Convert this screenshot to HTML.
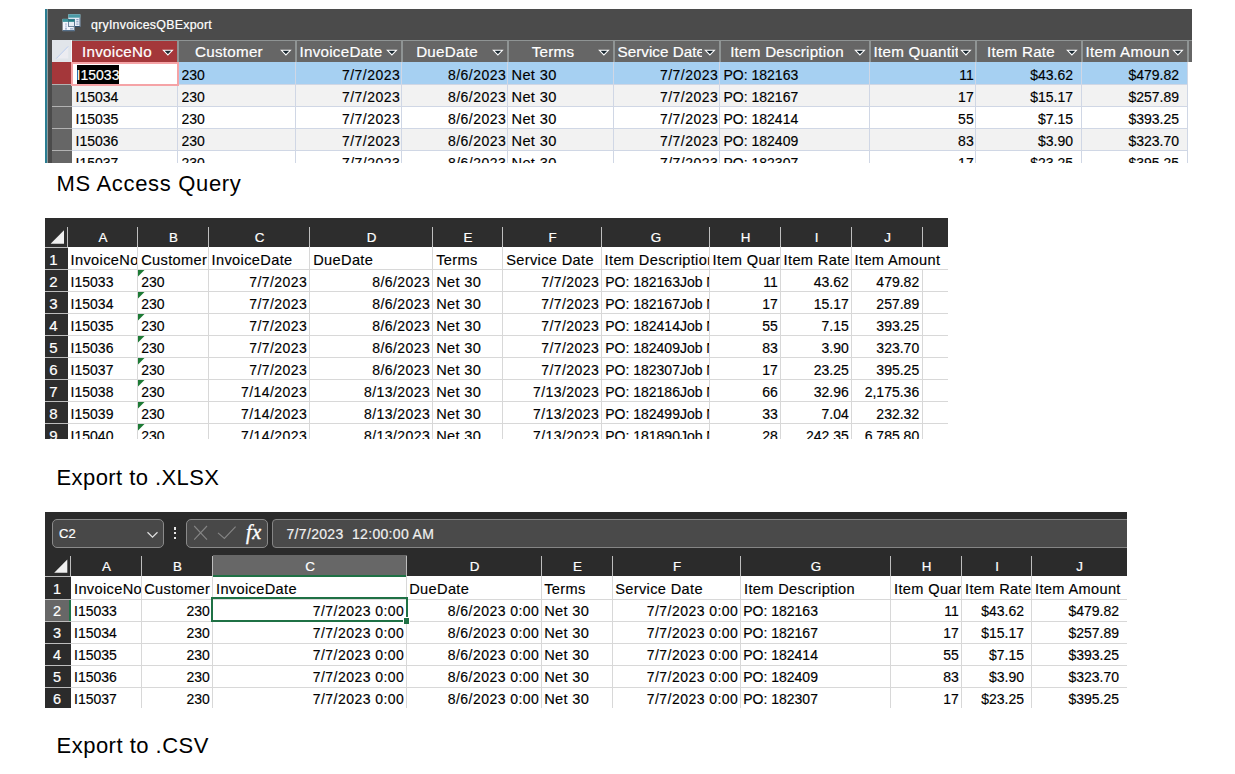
<!DOCTYPE html>
<html lang="en"><head><meta charset="utf-8"><title>Access export comparison</title>
<style>
html,body{margin:0;padding:0;background:#fff;}
body{width:1235px;height:774px;position:relative;overflow:hidden;font-family:"Liberation Sans", sans-serif;}
div{position:absolute;}
.t{font-family:"Liberation Sans", sans-serif;font-size:14px;line-height:22px;height:22px;white-space:pre;}
.t span{line-height:0;-webkit-text-stroke:0.15px currentColor;}
.lbl span{-webkit-text-stroke:0;}
.w span{-webkit-text-stroke:0.2px currentColor;}
</style></head><body>
<div class="sec" style="left:0;top:0;width:1235px;height:163px;overflow:hidden">
<div style="left:45px;top:9px;width:2px;height:154px;background:#2a7d91;"></div>
<div style="left:47px;top:9px;width:1px;height:154px;background:#8f9a9d;"></div>
<div style="left:48px;top:9px;width:1144px;height:32px;background:#4b4b4b;"></div>
<div style="left:48px;top:41px;width:4px;height:122px;background:#4b4b4b;"></div>
<svg style="position:absolute;left:62px;top:14px" width="19" height="18" viewBox="0 0 19 18"><rect x="6.3" y="0.3" width="12" height="12.6" fill="#e9eef8"/><rect x="6.3" y="0.3" width="12" height="3.4" fill="#4b9ba6"/><rect x="6.3" y="12" width="12" height="1" fill="#2f4f6d"/><rect x="17.5" y="3.7" width="0.9" height="9" fill="#54718d"/><rect x="14.3" y="5.2" width="2.2" height="1" fill="#7a8fb5"/><rect x="14.3" y="7.3" width="2.2" height="1" fill="#7a8fb5"/><rect x="14.3" y="9.4" width="2.2" height="1.6" fill="#aab6d2"/><rect x="0.6" y="4.9" width="12" height="12.2" fill="#f3f5fc"/><rect x="0.6" y="4.9" width="12" height="3" fill="#3f949c"/><rect x="0.6" y="16.2" width="12" height="1" fill="#2f4f6d"/><rect x="11.8" y="8" width="0.9" height="9" fill="#54718d"/><rect x="3" y="9.2" width="2" height="2.4" fill="#c6cde3"/><rect x="3" y="12.4" width="2" height="1" fill="#aab6d2"/><rect x="3" y="14.4" width="2" height="1" fill="#7a8fb5"/><rect x="8" y="14.4" width="3" height="1" fill="#7a8fb5"/><rect x="6.5" y="5.4" width="6" height="7" fill="#e6ecf4" stroke="#3a5877" stroke-width="0.7"/><rect x="6.5" y="5.4" width="6" height="2.4" fill="#1f7b82"/></svg>
<div class="t w" style="top:13px;color:#fff;left:91px;"><span style="font-size:12.4px;letter-spacing:0.24px;">qryInvoicesQBExport</span></div>
<div style="left:52px;top:40px;width:1140px;height:22px;background:#8f9494;"></div>
<div style="left:52px;top:40px;width:20px;height:23px;background:#e1e5ea;box-shadow:inset -1px -1px 0 #f4f6f8;"></div>
<svg style="position:absolute;left:52px;top:40px" width="20" height="23"><polygon points="16.2,6.6 16.2,18.6 4.2,18.6" fill="#ececf1"/><line x1="4.2" y1="18.6" x2="16.2" y2="6.4" stroke="#b5caee" stroke-width="0.9"/></svg>
<div style="left:72px;top:41px;width:105px;height:21px;background:#a4373a;"></div>
<div class="t w" style="top:41px;color:#fff;left:73.5px;width:87px;text-align:center;"><span style="font-size:15.2px;letter-spacing:0.25px;">InvoiceNo</span></div>
<svg style="position:absolute;left:162.2px;top:49px" width="12" height="8"><polygon points="1.4,1.3 10.4,1.3 5.9,6" fill="#17262f" stroke="#fff" stroke-width="1.1"/></svg>
<div style="left:179px;top:41px;width:116px;height:21px;background:#666666;"></div>
<div class="t w" style="top:41px;color:#fff;left:179.5px;width:99px;text-align:center;"><span style="font-size:15.2px;letter-spacing:0.25px;">Customer</span></div>
<svg style="position:absolute;left:280.2px;top:49px" width="12" height="8"><polygon points="1.4,1.3 10.4,1.3 5.9,6" fill="#17262f" stroke="#fff" stroke-width="1.1"/></svg>
<div style="left:297px;top:41px;width:104px;height:21px;background:#666666;"></div>
<div class="t w" style="top:41px;color:#fff;left:297.5px;width:87px;text-align:center;"><span style="font-size:15.2px;letter-spacing:0.25px;">InvoiceDate</span></div>
<svg style="position:absolute;left:386.2px;top:49px" width="12" height="8"><polygon points="1.4,1.3 10.4,1.3 5.9,6" fill="#17262f" stroke="#fff" stroke-width="1.1"/></svg>
<div style="left:403px;top:41px;width:104px;height:21px;background:#666666;"></div>
<div class="t w" style="top:41px;color:#fff;left:403.5px;width:87px;text-align:center;"><span style="font-size:15.2px;letter-spacing:0.25px;">DueDate</span></div>
<svg style="position:absolute;left:492.2px;top:49px" width="12" height="8"><polygon points="1.4,1.3 10.4,1.3 5.9,6" fill="#17262f" stroke="#fff" stroke-width="1.1"/></svg>
<div style="left:509px;top:41px;width:104px;height:21px;background:#666666;"></div>
<div class="t w" style="top:41px;color:#fff;left:509.5px;width:87px;text-align:center;"><span style="font-size:15.2px;letter-spacing:0.25px;">Terms</span></div>
<svg style="position:absolute;left:598.2px;top:49px" width="12" height="8"><polygon points="1.4,1.3 10.4,1.3 5.9,6" fill="#17262f" stroke="#fff" stroke-width="1.1"/></svg>
<div style="left:615px;top:41px;width:104px;height:21px;background:#666666;"></div>
<div class="t w" style="top:41px;color:#fff;left:617.5px;width:84.5px;overflow:hidden;"><span style="font-size:15.2px;letter-spacing:0.05px;">Service Date</span></div>
<svg style="position:absolute;left:704.2px;top:49px" width="12" height="8"><polygon points="1.4,1.3 10.4,1.3 5.9,6" fill="#17262f" stroke="#fff" stroke-width="1.1"/></svg>
<div style="left:721px;top:41px;width:148px;height:21px;background:#666666;"></div>
<div class="t w" style="top:41px;color:#fff;left:721.5px;width:131px;text-align:center;"><span style="font-size:15.2px;letter-spacing:0.25px;">Item Description</span></div>
<svg style="position:absolute;left:854.2px;top:49px" width="12" height="8"><polygon points="1.4,1.3 10.4,1.3 5.9,6" fill="#17262f" stroke="#fff" stroke-width="1.1"/></svg>
<div style="left:871px;top:41px;width:104px;height:21px;background:#666666;"></div>
<div class="t w" style="top:41px;color:#fff;left:873.5px;width:84.5px;overflow:hidden;"><span style="font-size:15.2px;letter-spacing:0.25px;">Item Quantity</span></div>
<svg style="position:absolute;left:960.2px;top:49px" width="12" height="8"><polygon points="1.4,1.3 10.4,1.3 5.9,6" fill="#17262f" stroke="#fff" stroke-width="1.1"/></svg>
<div style="left:977px;top:41px;width:104px;height:21px;background:#666666;"></div>
<div class="t w" style="top:41px;color:#fff;left:977.5px;width:87px;text-align:center;"><span style="font-size:15.2px;letter-spacing:0.25px;">Item Rate</span></div>
<svg style="position:absolute;left:1066.2px;top:49px" width="12" height="8"><polygon points="1.4,1.3 10.4,1.3 5.9,6" fill="#17262f" stroke="#fff" stroke-width="1.1"/></svg>
<div style="left:1083px;top:41px;width:104px;height:21px;background:#666666;"></div>
<div class="t w" style="top:41px;color:#fff;left:1085.5px;width:84.5px;overflow:hidden;"><span style="font-size:15.2px;letter-spacing:0.32px;">Item Amount</span></div>
<svg style="position:absolute;left:1172.2px;top:49px" width="12" height="8"><polygon points="1.4,1.3 10.4,1.3 5.9,6" fill="#17262f" stroke="#fff" stroke-width="1.1"/></svg>
<div style="left:1189px;top:41px;width:3px;height:21px;background:#666666;"></div>
<div style="left:52px;top:62px;width:20px;height:23px;background:#a4373a;"></div>
<div style="left:52px;top:84px;width:20px;height:2px;background:#b2b2b2;"></div>
<div style="left:72px;top:62px;width:1116px;height:23px;background:#a6d0f2;"></div>
<div style="left:72px;top:84px;width:1116px;height:1px;background:#d0d7e5;"></div>
<div style="left:177px;top:62px;width:1px;height:23px;background:#d0d7e5;"></div>
<div style="left:295px;top:62px;width:1px;height:23px;background:#d0d7e5;"></div>
<div class="t " style="top:64px;color:#000;left:181.5px;width:113px;overflow:hidden;"><span style="font-size:14px;">230</span></div>
<div style="left:401px;top:62px;width:1px;height:23px;background:#d0d7e5;"></div>
<div class="t " style="top:64px;color:#000;left:100.15px;width:300px;text-align:right;"><span style="font-size:14px;letter-spacing:0.45px;">7/7/2023</span></div>
<div style="left:507px;top:62px;width:1px;height:23px;background:#d0d7e5;"></div>
<div class="t " style="top:64px;color:#000;left:206.15px;width:300px;text-align:right;"><span style="font-size:14px;letter-spacing:0.45px;">8/6/2023</span></div>
<div style="left:613px;top:62px;width:1px;height:23px;background:#d0d7e5;"></div>
<div class="t " style="top:64px;color:#000;left:511.5px;width:101px;overflow:hidden;"><span style="font-size:14.6px;letter-spacing:0.35px;">Net 30</span></div>
<div style="left:719px;top:62px;width:1px;height:23px;background:#d0d7e5;"></div>
<div class="t " style="top:64px;color:#000;left:418.15px;width:300px;text-align:right;"><span style="font-size:14px;letter-spacing:0.45px;">7/7/2023</span></div>
<div style="left:869px;top:62px;width:1px;height:23px;background:#d0d7e5;"></div>
<div class="t " style="top:64px;color:#000;left:723.5px;width:145px;overflow:hidden;"><span style="font-size:14px;">PO: 182163</span></div>
<div style="left:975px;top:62px;width:1px;height:23px;background:#d0d7e5;"></div>
<div class="t " style="top:64px;color:#000;left:673.7px;width:300px;text-align:right;"><span style="font-size:14px;">11</span></div>
<div style="left:1081px;top:62px;width:1px;height:23px;background:#d0d7e5;"></div>
<div class="t " style="top:64px;color:#000;left:773px;width:300px;text-align:right;"><span style="font-size:14px;">$43.62</span></div>
<div style="left:1187px;top:62px;width:1px;height:23px;background:#d0d7e5;"></div>
<div class="t " style="top:64px;color:#000;left:879px;width:300px;text-align:right;"><span style="font-size:14px;">$479.82</span></div>
<div style="left:52px;top:85px;width:20px;height:22px;background:#666666;"></div>
<div style="left:52px;top:106px;width:20px;height:2px;background:#b2b2b2;"></div>
<div style="left:72px;top:85px;width:1116px;height:22px;background:#f2f2f2;"></div>
<div style="left:72px;top:106px;width:1116px;height:1px;background:#d0d7e5;"></div>
<div style="left:177px;top:85px;width:1px;height:22px;background:#d0d7e5;"></div>
<div class="t " style="top:86px;color:#000;left:75.5px;width:101px;overflow:hidden;"><span style="font-size:14px;">I15034</span></div>
<div style="left:295px;top:85px;width:1px;height:22px;background:#d0d7e5;"></div>
<div class="t " style="top:86px;color:#000;left:181.5px;width:113px;overflow:hidden;"><span style="font-size:14px;">230</span></div>
<div style="left:401px;top:85px;width:1px;height:22px;background:#d0d7e5;"></div>
<div class="t " style="top:86px;color:#000;left:100.15px;width:300px;text-align:right;"><span style="font-size:14px;letter-spacing:0.45px;">7/7/2023</span></div>
<div style="left:507px;top:85px;width:1px;height:22px;background:#d0d7e5;"></div>
<div class="t " style="top:86px;color:#000;left:206.15px;width:300px;text-align:right;"><span style="font-size:14px;letter-spacing:0.45px;">8/6/2023</span></div>
<div style="left:613px;top:85px;width:1px;height:22px;background:#d0d7e5;"></div>
<div class="t " style="top:86px;color:#000;left:511.5px;width:101px;overflow:hidden;"><span style="font-size:14.6px;letter-spacing:0.35px;">Net 30</span></div>
<div style="left:719px;top:85px;width:1px;height:22px;background:#d0d7e5;"></div>
<div class="t " style="top:86px;color:#000;left:418.15px;width:300px;text-align:right;"><span style="font-size:14px;letter-spacing:0.45px;">7/7/2023</span></div>
<div style="left:869px;top:85px;width:1px;height:22px;background:#d0d7e5;"></div>
<div class="t " style="top:86px;color:#000;left:723.5px;width:145px;overflow:hidden;"><span style="font-size:14px;">PO: 182167</span></div>
<div style="left:975px;top:85px;width:1px;height:22px;background:#d0d7e5;"></div>
<div class="t " style="top:86px;color:#000;left:673.7px;width:300px;text-align:right;"><span style="font-size:14px;">17</span></div>
<div style="left:1081px;top:85px;width:1px;height:22px;background:#d0d7e5;"></div>
<div class="t " style="top:86px;color:#000;left:773px;width:300px;text-align:right;"><span style="font-size:14px;">$15.17</span></div>
<div style="left:1187px;top:85px;width:1px;height:22px;background:#d0d7e5;"></div>
<div class="t " style="top:86px;color:#000;left:879px;width:300px;text-align:right;"><span style="font-size:14px;">$257.89</span></div>
<div style="left:52px;top:107px;width:20px;height:22px;background:#666666;"></div>
<div style="left:52px;top:128px;width:20px;height:2px;background:#b2b2b2;"></div>
<div style="left:72px;top:107px;width:1116px;height:22px;background:#ffffff;"></div>
<div style="left:72px;top:128px;width:1116px;height:1px;background:#d0d7e5;"></div>
<div style="left:177px;top:107px;width:1px;height:22px;background:#d0d7e5;"></div>
<div class="t " style="top:108px;color:#000;left:75.5px;width:101px;overflow:hidden;"><span style="font-size:14px;">I15035</span></div>
<div style="left:295px;top:107px;width:1px;height:22px;background:#d0d7e5;"></div>
<div class="t " style="top:108px;color:#000;left:181.5px;width:113px;overflow:hidden;"><span style="font-size:14px;">230</span></div>
<div style="left:401px;top:107px;width:1px;height:22px;background:#d0d7e5;"></div>
<div class="t " style="top:108px;color:#000;left:100.15px;width:300px;text-align:right;"><span style="font-size:14px;letter-spacing:0.45px;">7/7/2023</span></div>
<div style="left:507px;top:107px;width:1px;height:22px;background:#d0d7e5;"></div>
<div class="t " style="top:108px;color:#000;left:206.15px;width:300px;text-align:right;"><span style="font-size:14px;letter-spacing:0.45px;">8/6/2023</span></div>
<div style="left:613px;top:107px;width:1px;height:22px;background:#d0d7e5;"></div>
<div class="t " style="top:108px;color:#000;left:511.5px;width:101px;overflow:hidden;"><span style="font-size:14.6px;letter-spacing:0.35px;">Net 30</span></div>
<div style="left:719px;top:107px;width:1px;height:22px;background:#d0d7e5;"></div>
<div class="t " style="top:108px;color:#000;left:418.15px;width:300px;text-align:right;"><span style="font-size:14px;letter-spacing:0.45px;">7/7/2023</span></div>
<div style="left:869px;top:107px;width:1px;height:22px;background:#d0d7e5;"></div>
<div class="t " style="top:108px;color:#000;left:723.5px;width:145px;overflow:hidden;"><span style="font-size:14px;">PO: 182414</span></div>
<div style="left:975px;top:107px;width:1px;height:22px;background:#d0d7e5;"></div>
<div class="t " style="top:108px;color:#000;left:673.7px;width:300px;text-align:right;"><span style="font-size:14px;">55</span></div>
<div style="left:1081px;top:107px;width:1px;height:22px;background:#d0d7e5;"></div>
<div class="t " style="top:108px;color:#000;left:773px;width:300px;text-align:right;"><span style="font-size:14px;">$7.15</span></div>
<div style="left:1187px;top:107px;width:1px;height:22px;background:#d0d7e5;"></div>
<div class="t " style="top:108px;color:#000;left:879px;width:300px;text-align:right;"><span style="font-size:14px;">$393.25</span></div>
<div style="left:52px;top:129px;width:20px;height:22px;background:#666666;"></div>
<div style="left:52px;top:150px;width:20px;height:2px;background:#b2b2b2;"></div>
<div style="left:72px;top:129px;width:1116px;height:22px;background:#f2f2f2;"></div>
<div style="left:72px;top:150px;width:1116px;height:1px;background:#d0d7e5;"></div>
<div style="left:177px;top:129px;width:1px;height:22px;background:#d0d7e5;"></div>
<div class="t " style="top:130px;color:#000;left:75.5px;width:101px;overflow:hidden;"><span style="font-size:14px;">I15036</span></div>
<div style="left:295px;top:129px;width:1px;height:22px;background:#d0d7e5;"></div>
<div class="t " style="top:130px;color:#000;left:181.5px;width:113px;overflow:hidden;"><span style="font-size:14px;">230</span></div>
<div style="left:401px;top:129px;width:1px;height:22px;background:#d0d7e5;"></div>
<div class="t " style="top:130px;color:#000;left:100.15px;width:300px;text-align:right;"><span style="font-size:14px;letter-spacing:0.45px;">7/7/2023</span></div>
<div style="left:507px;top:129px;width:1px;height:22px;background:#d0d7e5;"></div>
<div class="t " style="top:130px;color:#000;left:206.15px;width:300px;text-align:right;"><span style="font-size:14px;letter-spacing:0.45px;">8/6/2023</span></div>
<div style="left:613px;top:129px;width:1px;height:22px;background:#d0d7e5;"></div>
<div class="t " style="top:130px;color:#000;left:511.5px;width:101px;overflow:hidden;"><span style="font-size:14.6px;letter-spacing:0.35px;">Net 30</span></div>
<div style="left:719px;top:129px;width:1px;height:22px;background:#d0d7e5;"></div>
<div class="t " style="top:130px;color:#000;left:418.15px;width:300px;text-align:right;"><span style="font-size:14px;letter-spacing:0.45px;">7/7/2023</span></div>
<div style="left:869px;top:129px;width:1px;height:22px;background:#d0d7e5;"></div>
<div class="t " style="top:130px;color:#000;left:723.5px;width:145px;overflow:hidden;"><span style="font-size:14px;">PO: 182409</span></div>
<div style="left:975px;top:129px;width:1px;height:22px;background:#d0d7e5;"></div>
<div class="t " style="top:130px;color:#000;left:673.7px;width:300px;text-align:right;"><span style="font-size:14px;">83</span></div>
<div style="left:1081px;top:129px;width:1px;height:22px;background:#d0d7e5;"></div>
<div class="t " style="top:130px;color:#000;left:773px;width:300px;text-align:right;"><span style="font-size:14px;">$3.90</span></div>
<div style="left:1187px;top:129px;width:1px;height:22px;background:#d0d7e5;"></div>
<div class="t " style="top:130px;color:#000;left:879px;width:300px;text-align:right;"><span style="font-size:14px;">$323.70</span></div>
<div style="left:52px;top:151px;width:20px;height:12px;background:#666666;"></div>
<div style="left:72px;top:151px;width:1116px;height:12px;background:#ffffff;"></div>
<div style="left:177px;top:151px;width:1px;height:12px;background:#d0d7e5;"></div>
<div class="t " style="top:152px;color:#000;left:75.5px;width:101px;overflow:hidden;"><span style="font-size:14px;">I15037</span></div>
<div style="left:295px;top:151px;width:1px;height:12px;background:#d0d7e5;"></div>
<div class="t " style="top:152px;color:#000;left:181.5px;width:113px;overflow:hidden;"><span style="font-size:14px;">230</span></div>
<div style="left:401px;top:151px;width:1px;height:12px;background:#d0d7e5;"></div>
<div class="t " style="top:152px;color:#000;left:100.15px;width:300px;text-align:right;"><span style="font-size:14px;letter-spacing:0.45px;">7/7/2023</span></div>
<div style="left:507px;top:151px;width:1px;height:12px;background:#d0d7e5;"></div>
<div class="t " style="top:152px;color:#000;left:206.15px;width:300px;text-align:right;"><span style="font-size:14px;letter-spacing:0.45px;">8/6/2023</span></div>
<div style="left:613px;top:151px;width:1px;height:12px;background:#d0d7e5;"></div>
<div class="t " style="top:152px;color:#000;left:511.5px;width:101px;overflow:hidden;"><span style="font-size:14.6px;letter-spacing:0.35px;">Net 30</span></div>
<div style="left:719px;top:151px;width:1px;height:12px;background:#d0d7e5;"></div>
<div class="t " style="top:152px;color:#000;left:418.15px;width:300px;text-align:right;"><span style="font-size:14px;letter-spacing:0.45px;">7/7/2023</span></div>
<div style="left:869px;top:151px;width:1px;height:12px;background:#d0d7e5;"></div>
<div class="t " style="top:152px;color:#000;left:723.5px;width:145px;overflow:hidden;"><span style="font-size:14px;">PO: 182307</span></div>
<div style="left:975px;top:151px;width:1px;height:12px;background:#d0d7e5;"></div>
<div class="t " style="top:152px;color:#000;left:673.7px;width:300px;text-align:right;"><span style="font-size:14px;">17</span></div>
<div style="left:1081px;top:151px;width:1px;height:12px;background:#d0d7e5;"></div>
<div class="t " style="top:152px;color:#000;left:773px;width:300px;text-align:right;"><span style="font-size:14px;">$23.25</span></div>
<div style="left:1187px;top:151px;width:1px;height:12px;background:#d0d7e5;"></div>
<div class="t " style="top:152px;color:#000;left:879px;width:300px;text-align:right;"><span style="font-size:14px;">$395.25</span></div>
<div style="left:71px;top:62px;width:108px;height:24px;background:#ffffff;box-sizing:border-box;border:2px solid #f5a3a6;"></div>
<div style="left:76.5px;top:64.5px;width:42.5px;height:19.5px;background:#000;"></div>
<div class="t w" style="top:64px;color:#fff;left:76.6px;"><span style="font-size:14px;">I15033</span></div>
</div>
<div class="sec" style="left:0;top:218px;width:1235px;height:221px;overflow:hidden">
<div style="left:45px;top:0px;width:903px;height:221px;background:#fff;"></div>
<div style="left:45px;top:0px;width:903px;height:29px;background:#2d2d2d;"></div>
<div style="left:45px;top:29px;width:23px;height:192px;background:#2d2d2d;"></div>
<div style="left:45px;top:29px;width:23px;height:1px;background:#bdbdbd;"></div>
<svg style="position:absolute;left:45px;top:0" width="22" height="29"><polygon points="19,12.3 19,25.7 5.6,25.7" fill="#f0f0f0"/></svg>
<div style="left:67px;top:9px;width:1px;height:20px;background:#bdbdbd;"></div>
<div class="t w" style="top:8px;color:#fff;left:83px;width:40px;text-align:center;"><span style="font-size:13.4px;">A</span></div>
<div style="left:137px;top:9px;width:1px;height:20px;background:#bdbdbd;"></div>
<div class="t w" style="top:8px;color:#fff;left:153.5px;width:40px;text-align:center;"><span style="font-size:13.4px;">B</span></div>
<div style="left:208px;top:9px;width:1px;height:20px;background:#bdbdbd;"></div>
<div class="t w" style="top:8px;color:#fff;left:239.5px;width:40px;text-align:center;"><span style="font-size:13.4px;">C</span></div>
<div style="left:309px;top:9px;width:1px;height:20px;background:#bdbdbd;"></div>
<div class="t w" style="top:8px;color:#fff;left:351.5px;width:40px;text-align:center;"><span style="font-size:13.4px;">D</span></div>
<div style="left:432px;top:9px;width:1px;height:20px;background:#bdbdbd;"></div>
<div class="t w" style="top:8px;color:#fff;left:448px;width:40px;text-align:center;"><span style="font-size:13.4px;">E</span></div>
<div style="left:502px;top:9px;width:1px;height:20px;background:#bdbdbd;"></div>
<div class="t w" style="top:8px;color:#fff;left:532.5px;width:40px;text-align:center;"><span style="font-size:13.4px;">F</span></div>
<div style="left:601px;top:9px;width:1px;height:20px;background:#bdbdbd;"></div>
<div class="t w" style="top:8px;color:#fff;left:636px;width:40px;text-align:center;"><span style="font-size:13.4px;">G</span></div>
<div style="left:709px;top:9px;width:1px;height:20px;background:#bdbdbd;"></div>
<div class="t w" style="top:8px;color:#fff;left:725.5px;width:40px;text-align:center;"><span style="font-size:13.4px;">H</span></div>
<div style="left:780px;top:9px;width:1px;height:20px;background:#bdbdbd;"></div>
<div class="t w" style="top:8px;color:#fff;left:796.5px;width:40px;text-align:center;"><span style="font-size:13.4px;">I</span></div>
<div style="left:851px;top:9px;width:1px;height:20px;background:#bdbdbd;"></div>
<div class="t w" style="top:8px;color:#fff;left:867.5px;width:40px;text-align:center;"><span style="font-size:13.4px;">J</span></div>
<div style="left:922px;top:9px;width:1px;height:20px;background:#bdbdbd;"></div>
<div style="left:45px;top:51px;width:23px;height:1px;background:#bdbdbd;"></div>
<div class="t w" style="top:31px;color:#fff;left:42.3px;width:22px;text-align:center;"><span style="font-size:15px;">1</span></div>
<div style="left:68px;top:51px;width:880px;height:1px;background:#d8d8d8;"></div>
<div style="left:137px;top:28px;width:1px;height:24px;background:#d8d8d8;"></div>
<div class="t " style="top:31px;color:#000;left:70.6px;width:66.4px;overflow:hidden;"><span style="font-size:14.6px;letter-spacing:0.35px;">InvoiceNo</span></div>
<div style="left:208px;top:28px;width:1px;height:24px;background:#d8d8d8;"></div>
<div class="t " style="top:31px;color:#000;left:141.2px;width:66.8px;overflow:hidden;"><span style="font-size:14.6px;letter-spacing:0.35px;">Customer</span></div>
<div style="left:309px;top:28px;width:1px;height:24px;background:#d8d8d8;"></div>
<div class="t " style="top:31px;color:#000;left:211.6px;width:97.4px;overflow:hidden;"><span style="font-size:14.6px;letter-spacing:0.35px;">InvoiceDate</span></div>
<div style="left:432px;top:28px;width:1px;height:24px;background:#d8d8d8;"></div>
<div class="t " style="top:31px;color:#000;left:313.2px;width:118.8px;overflow:hidden;"><span style="font-size:14.6px;letter-spacing:0.35px;">DueDate</span></div>
<div style="left:502px;top:28px;width:1px;height:24px;background:#d8d8d8;"></div>
<div class="t " style="top:31px;color:#000;left:436.2px;width:65.8px;overflow:hidden;"><span style="font-size:14.6px;letter-spacing:0.35px;">Terms</span></div>
<div style="left:601px;top:28px;width:1px;height:24px;background:#d8d8d8;"></div>
<div class="t " style="top:31px;color:#000;left:506.2px;width:94.8px;overflow:hidden;"><span style="font-size:14.6px;letter-spacing:0.35px;">Service Date</span></div>
<div style="left:709px;top:28px;width:1px;height:24px;background:#d8d8d8;"></div>
<div class="t " style="top:31px;color:#000;left:604.6px;width:104.4px;overflow:hidden;"><span style="font-size:14.6px;letter-spacing:0.35px;">Item Description</span></div>
<div style="left:780px;top:28px;width:1px;height:24px;background:#d8d8d8;"></div>
<div class="t " style="top:31px;color:#000;left:712.6px;width:67.4px;overflow:hidden;"><span style="font-size:14.6px;letter-spacing:0.35px;">Item Quantity</span></div>
<div style="left:851px;top:28px;width:1px;height:24px;background:#d8d8d8;"></div>
<div class="t " style="top:31px;color:#000;left:783.6px;width:67.4px;overflow:hidden;"><span style="font-size:14.6px;letter-spacing:0.35px;">Item Rate</span></div>
<div class="t " style="top:31px;color:#000;left:854.6px;width:100px;overflow:hidden;"><span style="font-size:14.6px;letter-spacing:0.35px;">Item Amount</span></div>
<div style="left:45px;top:73px;width:23px;height:1px;background:#bdbdbd;"></div>
<div class="t w" style="top:53px;color:#fff;left:42.3px;width:22px;text-align:center;"><span style="font-size:15px;">2</span></div>
<div style="left:68px;top:73px;width:880px;height:1px;background:#d8d8d8;"></div>
<div style="left:137px;top:52px;width:1px;height:22px;background:#d8d8d8;"></div>
<div class="t " style="top:53px;color:#000;left:70.6px;width:66.4px;overflow:hidden;"><span style="font-size:14px;">I15033</span></div>
<div style="left:208px;top:52px;width:1px;height:22px;background:#d8d8d8;"></div>
<div class="t " style="top:53px;color:#000;left:141.2px;width:66.8px;overflow:hidden;"><span style="font-size:14px;">230</span></div>
<svg style="position:absolute;left:138px;top:52px" width="7" height="7"><polygon points="0,0 6.5,0 0,6.5" fill="#1d7a35"/></svg>
<div style="left:309px;top:52px;width:1px;height:22px;background:#d8d8d8;"></div>
<div class="t " style="top:53px;color:#000;left:7.25px;width:300px;text-align:right;"><span style="font-size:14px;letter-spacing:0.45px;">7/7/2023</span></div>
<div style="left:432px;top:52px;width:1px;height:22px;background:#d8d8d8;"></div>
<div class="t " style="top:53px;color:#000;left:130.25px;width:300px;text-align:right;"><span style="font-size:14px;letter-spacing:0.45px;">8/6/2023</span></div>
<div style="left:502px;top:52px;width:1px;height:22px;background:#d8d8d8;"></div>
<div class="t " style="top:53px;color:#000;left:436.2px;width:65.8px;overflow:hidden;"><span style="font-size:14.6px;letter-spacing:0.35px;">Net 30</span></div>
<div style="left:601px;top:52px;width:1px;height:22px;background:#d8d8d8;"></div>
<div class="t " style="top:53px;color:#000;left:299.25px;width:300px;text-align:right;"><span style="font-size:14px;letter-spacing:0.45px;">7/7/2023</span></div>
<div style="left:709px;top:52px;width:1px;height:22px;background:#d8d8d8;"></div>
<div class="t " style="top:53px;color:#000;left:605.2px;width:103.8px;overflow:hidden;"><span style="font-size:14px;">PO: 182163Job No:</span></div>
<div style="left:780px;top:52px;width:1px;height:22px;background:#d8d8d8;"></div>
<div class="t " style="top:53px;color:#000;left:477.8px;width:300px;text-align:right;"><span style="font-size:14px;">11</span></div>
<div style="left:851px;top:52px;width:1px;height:22px;background:#d8d8d8;"></div>
<div class="t " style="top:53px;color:#000;left:548.8px;width:300px;text-align:right;"><span style="font-size:14px;">43.62</span></div>
<div style="left:922px;top:52px;width:1px;height:22px;background:#d8d8d8;"></div>
<div class="t " style="top:53px;color:#000;left:619.2px;width:300px;text-align:right;"><span style="font-size:14px;">479.82</span></div>
<div style="left:45px;top:95px;width:23px;height:1px;background:#bdbdbd;"></div>
<div class="t w" style="top:75px;color:#fff;left:42.3px;width:22px;text-align:center;"><span style="font-size:15px;">3</span></div>
<div style="left:68px;top:95px;width:880px;height:1px;background:#d8d8d8;"></div>
<div style="left:137px;top:74px;width:1px;height:22px;background:#d8d8d8;"></div>
<div class="t " style="top:75px;color:#000;left:70.6px;width:66.4px;overflow:hidden;"><span style="font-size:14px;">I15034</span></div>
<div style="left:208px;top:74px;width:1px;height:22px;background:#d8d8d8;"></div>
<div class="t " style="top:75px;color:#000;left:141.2px;width:66.8px;overflow:hidden;"><span style="font-size:14px;">230</span></div>
<svg style="position:absolute;left:138px;top:74px" width="7" height="7"><polygon points="0,0 6.5,0 0,6.5" fill="#1d7a35"/></svg>
<div style="left:309px;top:74px;width:1px;height:22px;background:#d8d8d8;"></div>
<div class="t " style="top:75px;color:#000;left:7.25px;width:300px;text-align:right;"><span style="font-size:14px;letter-spacing:0.45px;">7/7/2023</span></div>
<div style="left:432px;top:74px;width:1px;height:22px;background:#d8d8d8;"></div>
<div class="t " style="top:75px;color:#000;left:130.25px;width:300px;text-align:right;"><span style="font-size:14px;letter-spacing:0.45px;">8/6/2023</span></div>
<div style="left:502px;top:74px;width:1px;height:22px;background:#d8d8d8;"></div>
<div class="t " style="top:75px;color:#000;left:436.2px;width:65.8px;overflow:hidden;"><span style="font-size:14.6px;letter-spacing:0.35px;">Net 30</span></div>
<div style="left:601px;top:74px;width:1px;height:22px;background:#d8d8d8;"></div>
<div class="t " style="top:75px;color:#000;left:299.25px;width:300px;text-align:right;"><span style="font-size:14px;letter-spacing:0.45px;">7/7/2023</span></div>
<div style="left:709px;top:74px;width:1px;height:22px;background:#d8d8d8;"></div>
<div class="t " style="top:75px;color:#000;left:605.2px;width:103.8px;overflow:hidden;"><span style="font-size:14px;">PO: 182167Job No:</span></div>
<div style="left:780px;top:74px;width:1px;height:22px;background:#d8d8d8;"></div>
<div class="t " style="top:75px;color:#000;left:477.8px;width:300px;text-align:right;"><span style="font-size:14px;">17</span></div>
<div style="left:851px;top:74px;width:1px;height:22px;background:#d8d8d8;"></div>
<div class="t " style="top:75px;color:#000;left:548.8px;width:300px;text-align:right;"><span style="font-size:14px;">15.17</span></div>
<div style="left:922px;top:74px;width:1px;height:22px;background:#d8d8d8;"></div>
<div class="t " style="top:75px;color:#000;left:619.2px;width:300px;text-align:right;"><span style="font-size:14px;">257.89</span></div>
<div style="left:45px;top:117px;width:23px;height:1px;background:#bdbdbd;"></div>
<div class="t w" style="top:97px;color:#fff;left:42.3px;width:22px;text-align:center;"><span style="font-size:15px;">4</span></div>
<div style="left:68px;top:117px;width:880px;height:1px;background:#d8d8d8;"></div>
<div style="left:137px;top:96px;width:1px;height:22px;background:#d8d8d8;"></div>
<div class="t " style="top:97px;color:#000;left:70.6px;width:66.4px;overflow:hidden;"><span style="font-size:14px;">I15035</span></div>
<div style="left:208px;top:96px;width:1px;height:22px;background:#d8d8d8;"></div>
<div class="t " style="top:97px;color:#000;left:141.2px;width:66.8px;overflow:hidden;"><span style="font-size:14px;">230</span></div>
<svg style="position:absolute;left:138px;top:96px" width="7" height="7"><polygon points="0,0 6.5,0 0,6.5" fill="#1d7a35"/></svg>
<div style="left:309px;top:96px;width:1px;height:22px;background:#d8d8d8;"></div>
<div class="t " style="top:97px;color:#000;left:7.25px;width:300px;text-align:right;"><span style="font-size:14px;letter-spacing:0.45px;">7/7/2023</span></div>
<div style="left:432px;top:96px;width:1px;height:22px;background:#d8d8d8;"></div>
<div class="t " style="top:97px;color:#000;left:130.25px;width:300px;text-align:right;"><span style="font-size:14px;letter-spacing:0.45px;">8/6/2023</span></div>
<div style="left:502px;top:96px;width:1px;height:22px;background:#d8d8d8;"></div>
<div class="t " style="top:97px;color:#000;left:436.2px;width:65.8px;overflow:hidden;"><span style="font-size:14.6px;letter-spacing:0.35px;">Net 30</span></div>
<div style="left:601px;top:96px;width:1px;height:22px;background:#d8d8d8;"></div>
<div class="t " style="top:97px;color:#000;left:299.25px;width:300px;text-align:right;"><span style="font-size:14px;letter-spacing:0.45px;">7/7/2023</span></div>
<div style="left:709px;top:96px;width:1px;height:22px;background:#d8d8d8;"></div>
<div class="t " style="top:97px;color:#000;left:605.2px;width:103.8px;overflow:hidden;"><span style="font-size:14px;">PO: 182414Job No:</span></div>
<div style="left:780px;top:96px;width:1px;height:22px;background:#d8d8d8;"></div>
<div class="t " style="top:97px;color:#000;left:477.8px;width:300px;text-align:right;"><span style="font-size:14px;">55</span></div>
<div style="left:851px;top:96px;width:1px;height:22px;background:#d8d8d8;"></div>
<div class="t " style="top:97px;color:#000;left:548.8px;width:300px;text-align:right;"><span style="font-size:14px;">7.15</span></div>
<div style="left:922px;top:96px;width:1px;height:22px;background:#d8d8d8;"></div>
<div class="t " style="top:97px;color:#000;left:619.2px;width:300px;text-align:right;"><span style="font-size:14px;">393.25</span></div>
<div style="left:45px;top:139px;width:23px;height:1px;background:#bdbdbd;"></div>
<div class="t w" style="top:119px;color:#fff;left:42.3px;width:22px;text-align:center;"><span style="font-size:15px;">5</span></div>
<div style="left:68px;top:139px;width:880px;height:1px;background:#d8d8d8;"></div>
<div style="left:137px;top:118px;width:1px;height:22px;background:#d8d8d8;"></div>
<div class="t " style="top:119px;color:#000;left:70.6px;width:66.4px;overflow:hidden;"><span style="font-size:14px;">I15036</span></div>
<div style="left:208px;top:118px;width:1px;height:22px;background:#d8d8d8;"></div>
<div class="t " style="top:119px;color:#000;left:141.2px;width:66.8px;overflow:hidden;"><span style="font-size:14px;">230</span></div>
<svg style="position:absolute;left:138px;top:118px" width="7" height="7"><polygon points="0,0 6.5,0 0,6.5" fill="#1d7a35"/></svg>
<div style="left:309px;top:118px;width:1px;height:22px;background:#d8d8d8;"></div>
<div class="t " style="top:119px;color:#000;left:7.25px;width:300px;text-align:right;"><span style="font-size:14px;letter-spacing:0.45px;">7/7/2023</span></div>
<div style="left:432px;top:118px;width:1px;height:22px;background:#d8d8d8;"></div>
<div class="t " style="top:119px;color:#000;left:130.25px;width:300px;text-align:right;"><span style="font-size:14px;letter-spacing:0.45px;">8/6/2023</span></div>
<div style="left:502px;top:118px;width:1px;height:22px;background:#d8d8d8;"></div>
<div class="t " style="top:119px;color:#000;left:436.2px;width:65.8px;overflow:hidden;"><span style="font-size:14.6px;letter-spacing:0.35px;">Net 30</span></div>
<div style="left:601px;top:118px;width:1px;height:22px;background:#d8d8d8;"></div>
<div class="t " style="top:119px;color:#000;left:299.25px;width:300px;text-align:right;"><span style="font-size:14px;letter-spacing:0.45px;">7/7/2023</span></div>
<div style="left:709px;top:118px;width:1px;height:22px;background:#d8d8d8;"></div>
<div class="t " style="top:119px;color:#000;left:605.2px;width:103.8px;overflow:hidden;"><span style="font-size:14px;">PO: 182409Job No:</span></div>
<div style="left:780px;top:118px;width:1px;height:22px;background:#d8d8d8;"></div>
<div class="t " style="top:119px;color:#000;left:477.8px;width:300px;text-align:right;"><span style="font-size:14px;">83</span></div>
<div style="left:851px;top:118px;width:1px;height:22px;background:#d8d8d8;"></div>
<div class="t " style="top:119px;color:#000;left:548.8px;width:300px;text-align:right;"><span style="font-size:14px;">3.90</span></div>
<div style="left:922px;top:118px;width:1px;height:22px;background:#d8d8d8;"></div>
<div class="t " style="top:119px;color:#000;left:619.2px;width:300px;text-align:right;"><span style="font-size:14px;">323.70</span></div>
<div style="left:45px;top:161px;width:23px;height:1px;background:#bdbdbd;"></div>
<div class="t w" style="top:141px;color:#fff;left:42.3px;width:22px;text-align:center;"><span style="font-size:15px;">6</span></div>
<div style="left:68px;top:161px;width:880px;height:1px;background:#d8d8d8;"></div>
<div style="left:137px;top:140px;width:1px;height:22px;background:#d8d8d8;"></div>
<div class="t " style="top:141px;color:#000;left:70.6px;width:66.4px;overflow:hidden;"><span style="font-size:14px;">I15037</span></div>
<div style="left:208px;top:140px;width:1px;height:22px;background:#d8d8d8;"></div>
<div class="t " style="top:141px;color:#000;left:141.2px;width:66.8px;overflow:hidden;"><span style="font-size:14px;">230</span></div>
<svg style="position:absolute;left:138px;top:140px" width="7" height="7"><polygon points="0,0 6.5,0 0,6.5" fill="#1d7a35"/></svg>
<div style="left:309px;top:140px;width:1px;height:22px;background:#d8d8d8;"></div>
<div class="t " style="top:141px;color:#000;left:7.25px;width:300px;text-align:right;"><span style="font-size:14px;letter-spacing:0.45px;">7/7/2023</span></div>
<div style="left:432px;top:140px;width:1px;height:22px;background:#d8d8d8;"></div>
<div class="t " style="top:141px;color:#000;left:130.25px;width:300px;text-align:right;"><span style="font-size:14px;letter-spacing:0.45px;">8/6/2023</span></div>
<div style="left:502px;top:140px;width:1px;height:22px;background:#d8d8d8;"></div>
<div class="t " style="top:141px;color:#000;left:436.2px;width:65.8px;overflow:hidden;"><span style="font-size:14.6px;letter-spacing:0.35px;">Net 30</span></div>
<div style="left:601px;top:140px;width:1px;height:22px;background:#d8d8d8;"></div>
<div class="t " style="top:141px;color:#000;left:299.25px;width:300px;text-align:right;"><span style="font-size:14px;letter-spacing:0.45px;">7/7/2023</span></div>
<div style="left:709px;top:140px;width:1px;height:22px;background:#d8d8d8;"></div>
<div class="t " style="top:141px;color:#000;left:605.2px;width:103.8px;overflow:hidden;"><span style="font-size:14px;">PO: 182307Job No:</span></div>
<div style="left:780px;top:140px;width:1px;height:22px;background:#d8d8d8;"></div>
<div class="t " style="top:141px;color:#000;left:477.8px;width:300px;text-align:right;"><span style="font-size:14px;">17</span></div>
<div style="left:851px;top:140px;width:1px;height:22px;background:#d8d8d8;"></div>
<div class="t " style="top:141px;color:#000;left:548.8px;width:300px;text-align:right;"><span style="font-size:14px;">23.25</span></div>
<div style="left:922px;top:140px;width:1px;height:22px;background:#d8d8d8;"></div>
<div class="t " style="top:141px;color:#000;left:619.2px;width:300px;text-align:right;"><span style="font-size:14px;">395.25</span></div>
<div style="left:45px;top:183px;width:23px;height:1px;background:#bdbdbd;"></div>
<div class="t w" style="top:163px;color:#fff;left:42.3px;width:22px;text-align:center;"><span style="font-size:15px;">7</span></div>
<div style="left:68px;top:183px;width:880px;height:1px;background:#d8d8d8;"></div>
<div style="left:137px;top:162px;width:1px;height:22px;background:#d8d8d8;"></div>
<div class="t " style="top:163px;color:#000;left:70.6px;width:66.4px;overflow:hidden;"><span style="font-size:14px;">I15038</span></div>
<div style="left:208px;top:162px;width:1px;height:22px;background:#d8d8d8;"></div>
<div class="t " style="top:163px;color:#000;left:141.2px;width:66.8px;overflow:hidden;"><span style="font-size:14px;">230</span></div>
<svg style="position:absolute;left:138px;top:162px" width="7" height="7"><polygon points="0,0 6.5,0 0,6.5" fill="#1d7a35"/></svg>
<div style="left:309px;top:162px;width:1px;height:22px;background:#d8d8d8;"></div>
<div class="t " style="top:163px;color:#000;left:7.25px;width:300px;text-align:right;"><span style="font-size:14px;letter-spacing:0.45px;">7/14/2023</span></div>
<div style="left:432px;top:162px;width:1px;height:22px;background:#d8d8d8;"></div>
<div class="t " style="top:163px;color:#000;left:130.25px;width:300px;text-align:right;"><span style="font-size:14px;letter-spacing:0.45px;">8/13/2023</span></div>
<div style="left:502px;top:162px;width:1px;height:22px;background:#d8d8d8;"></div>
<div class="t " style="top:163px;color:#000;left:436.2px;width:65.8px;overflow:hidden;"><span style="font-size:14.6px;letter-spacing:0.35px;">Net 30</span></div>
<div style="left:601px;top:162px;width:1px;height:22px;background:#d8d8d8;"></div>
<div class="t " style="top:163px;color:#000;left:299.25px;width:300px;text-align:right;"><span style="font-size:14px;letter-spacing:0.45px;">7/13/2023</span></div>
<div style="left:709px;top:162px;width:1px;height:22px;background:#d8d8d8;"></div>
<div class="t " style="top:163px;color:#000;left:605.2px;width:103.8px;overflow:hidden;"><span style="font-size:14px;">PO: 182186Job No:</span></div>
<div style="left:780px;top:162px;width:1px;height:22px;background:#d8d8d8;"></div>
<div class="t " style="top:163px;color:#000;left:477.8px;width:300px;text-align:right;"><span style="font-size:14px;">66</span></div>
<div style="left:851px;top:162px;width:1px;height:22px;background:#d8d8d8;"></div>
<div class="t " style="top:163px;color:#000;left:548.8px;width:300px;text-align:right;"><span style="font-size:14px;">32.96</span></div>
<div style="left:922px;top:162px;width:1px;height:22px;background:#d8d8d8;"></div>
<div class="t " style="top:163px;color:#000;left:619.2px;width:300px;text-align:right;"><span style="font-size:14px;">2,175.36</span></div>
<div style="left:45px;top:205px;width:23px;height:1px;background:#bdbdbd;"></div>
<div class="t w" style="top:185px;color:#fff;left:42.3px;width:22px;text-align:center;"><span style="font-size:15px;">8</span></div>
<div style="left:68px;top:205px;width:880px;height:1px;background:#d8d8d8;"></div>
<div style="left:137px;top:184px;width:1px;height:22px;background:#d8d8d8;"></div>
<div class="t " style="top:185px;color:#000;left:70.6px;width:66.4px;overflow:hidden;"><span style="font-size:14px;">I15039</span></div>
<div style="left:208px;top:184px;width:1px;height:22px;background:#d8d8d8;"></div>
<div class="t " style="top:185px;color:#000;left:141.2px;width:66.8px;overflow:hidden;"><span style="font-size:14px;">230</span></div>
<svg style="position:absolute;left:138px;top:184px" width="7" height="7"><polygon points="0,0 6.5,0 0,6.5" fill="#1d7a35"/></svg>
<div style="left:309px;top:184px;width:1px;height:22px;background:#d8d8d8;"></div>
<div class="t " style="top:185px;color:#000;left:7.25px;width:300px;text-align:right;"><span style="font-size:14px;letter-spacing:0.45px;">7/14/2023</span></div>
<div style="left:432px;top:184px;width:1px;height:22px;background:#d8d8d8;"></div>
<div class="t " style="top:185px;color:#000;left:130.25px;width:300px;text-align:right;"><span style="font-size:14px;letter-spacing:0.45px;">8/13/2023</span></div>
<div style="left:502px;top:184px;width:1px;height:22px;background:#d8d8d8;"></div>
<div class="t " style="top:185px;color:#000;left:436.2px;width:65.8px;overflow:hidden;"><span style="font-size:14.6px;letter-spacing:0.35px;">Net 30</span></div>
<div style="left:601px;top:184px;width:1px;height:22px;background:#d8d8d8;"></div>
<div class="t " style="top:185px;color:#000;left:299.25px;width:300px;text-align:right;"><span style="font-size:14px;letter-spacing:0.45px;">7/13/2023</span></div>
<div style="left:709px;top:184px;width:1px;height:22px;background:#d8d8d8;"></div>
<div class="t " style="top:185px;color:#000;left:605.2px;width:103.8px;overflow:hidden;"><span style="font-size:14px;">PO: 182499Job No:</span></div>
<div style="left:780px;top:184px;width:1px;height:22px;background:#d8d8d8;"></div>
<div class="t " style="top:185px;color:#000;left:477.8px;width:300px;text-align:right;"><span style="font-size:14px;">33</span></div>
<div style="left:851px;top:184px;width:1px;height:22px;background:#d8d8d8;"></div>
<div class="t " style="top:185px;color:#000;left:548.8px;width:300px;text-align:right;"><span style="font-size:14px;">7.04</span></div>
<div style="left:922px;top:184px;width:1px;height:22px;background:#d8d8d8;"></div>
<div class="t " style="top:185px;color:#000;left:619.2px;width:300px;text-align:right;"><span style="font-size:14px;">232.32</span></div>
<div style="left:45px;top:227px;width:23px;height:1px;background:#bdbdbd;"></div>
<div class="t w" style="top:207px;color:#fff;left:42.3px;width:22px;text-align:center;"><span style="font-size:15px;">9</span></div>
<div style="left:68px;top:227px;width:880px;height:1px;background:#d8d8d8;"></div>
<div style="left:137px;top:206px;width:1px;height:22px;background:#d8d8d8;"></div>
<div class="t " style="top:207px;color:#000;left:70.6px;width:66.4px;overflow:hidden;"><span style="font-size:14px;">I15040</span></div>
<div style="left:208px;top:206px;width:1px;height:22px;background:#d8d8d8;"></div>
<div class="t " style="top:207px;color:#000;left:141.2px;width:66.8px;overflow:hidden;"><span style="font-size:14px;">230</span></div>
<svg style="position:absolute;left:138px;top:206px" width="7" height="7"><polygon points="0,0 6.5,0 0,6.5" fill="#1d7a35"/></svg>
<div style="left:309px;top:206px;width:1px;height:22px;background:#d8d8d8;"></div>
<div class="t " style="top:207px;color:#000;left:7.25px;width:300px;text-align:right;"><span style="font-size:14px;letter-spacing:0.45px;">7/14/2023</span></div>
<div style="left:432px;top:206px;width:1px;height:22px;background:#d8d8d8;"></div>
<div class="t " style="top:207px;color:#000;left:130.25px;width:300px;text-align:right;"><span style="font-size:14px;letter-spacing:0.45px;">8/13/2023</span></div>
<div style="left:502px;top:206px;width:1px;height:22px;background:#d8d8d8;"></div>
<div class="t " style="top:207px;color:#000;left:436.2px;width:65.8px;overflow:hidden;"><span style="font-size:14.6px;letter-spacing:0.35px;">Net 30</span></div>
<div style="left:601px;top:206px;width:1px;height:22px;background:#d8d8d8;"></div>
<div class="t " style="top:207px;color:#000;left:299.25px;width:300px;text-align:right;"><span style="font-size:14px;letter-spacing:0.45px;">7/13/2023</span></div>
<div style="left:709px;top:206px;width:1px;height:22px;background:#d8d8d8;"></div>
<div class="t " style="top:207px;color:#000;left:605.2px;width:103.8px;overflow:hidden;"><span style="font-size:14px;">PO: 181890Job No:</span></div>
<div style="left:780px;top:206px;width:1px;height:22px;background:#d8d8d8;"></div>
<div class="t " style="top:207px;color:#000;left:477.8px;width:300px;text-align:right;"><span style="font-size:14px;">28</span></div>
<div style="left:851px;top:206px;width:1px;height:22px;background:#d8d8d8;"></div>
<div class="t " style="top:207px;color:#000;left:548.8px;width:300px;text-align:right;"><span style="font-size:14px;">242.35</span></div>
<div style="left:922px;top:206px;width:1px;height:22px;background:#d8d8d8;"></div>
<div class="t " style="top:207px;color:#000;left:619.2px;width:300px;text-align:right;"><span style="font-size:14px;">6,785.80</span></div>
</div>
<div class="sec" style="left:0;top:512px;width:1127px;height:196px;overflow:hidden">
<div style="left:45px;top:0px;width:1082px;height:196px;background:#fff;"></div>
<div style="left:45px;top:0px;width:1082px;height:64px;background:#2b2b2b;"></div>
<div style="left:45px;top:64px;width:26px;height:132px;background:#2b2b2b;"></div>
<div style="left:45px;top:64px;width:26px;height:1px;background:#bdbdbd;"></div>
<div style="left:52px;top:7px;width:112px;height:29px;background:#484848;box-sizing:border-box;border:1px solid #8a8a8a;border-radius:5px;"></div>
<div class="t w" style="top:10px;color:#fff;left:59px;"><span style="font-size:13px;">C2</span></div>
<svg style="position:absolute;left:145.5px;top:19px" width="14" height="9"><polyline points="1.5,1.3 6.5,6.2 11.5,1.3" fill="none" stroke="#e0e0e0" stroke-width="1.2"/></svg>
<div style="left:173.8px;top:15.399999999999977px;width:2.4px;height:2.2px;background:#e8e8e8;"></div>
<div style="left:173.8px;top:20px;width:2.4px;height:2.2px;background:#e8e8e8;"></div>
<div style="left:173.8px;top:24.600000000000023px;width:2.4px;height:2.2px;background:#e8e8e8;"></div>
<div style="left:186px;top:7px;width:82px;height:29px;background:#484848;box-sizing:border-box;border:1px solid #8a8a8a;border-radius:5px;"></div>
<svg style="position:absolute;left:193px;top:13px" width="16" height="16"><path d="M1.2,1 L14,14.6 M14,1 L1.2,14.6" stroke="#858585" stroke-width="1.1" fill="none"/></svg>
<svg style="position:absolute;left:217px;top:13px" width="20" height="16"><path d="M1,7.8 L7.4,13.4 L18.6,1.6" stroke="#858585" stroke-width="1.1" fill="none"/></svg>
<div class="t w" style="top:11px;color:#fff;left:246px;"><span style="font-size:20px;letter-spacing:0.8px;font-family:'Liberation Serif',serif;font-style:italic;-webkit-text-stroke:0.4px #fff;">fx</span></div>
<div style="left:272px;top:7px;width:870px;height:29px;background:#4a4a4a;box-sizing:border-box;border:1px solid #858585;border-radius:4px 0 0 4px;"></div>
<div class="t w" style="top:11px;color:#f0f0f0;left:286.5px;"><span style="font-size:14px;letter-spacing:0.32px;">7/7/2023  12:00:00 AM</span></div>
<svg style="position:absolute;left:45px;top:43px" width="26" height="22"><polygon points="22.3,4.6 22.3,17.8 9.2,17.8" fill="#f0f0f0"/></svg>
<div style="left:70px;top:44px;width:1px;height:20px;background:#bdbdbd;"></div>
<div class="t w" style="top:43px;color:#fff;left:86.5px;width:40px;text-align:center;"><span style="font-size:13.4px;">A</span></div>
<div style="left:141px;top:44px;width:1px;height:20px;background:#bdbdbd;"></div>
<div class="t w" style="top:43px;color:#fff;left:157.5px;width:40px;text-align:center;"><span style="font-size:13.4px;">B</span></div>
<div style="left:213px;top:43px;width:194px;height:21px;background:#676767;"></div>
<div style="left:213px;top:63px;width:193px;height:2px;background:#1f7145;"></div>
<div style="left:212px;top:44px;width:1px;height:20px;background:#bdbdbd;"></div>
<div class="t w" style="top:43px;color:#fff;left:290px;width:40px;text-align:center;"><span style="font-size:13.4px;">C</span></div>
<div style="left:406px;top:44px;width:1px;height:20px;background:#bdbdbd;"></div>
<div class="t w" style="top:43px;color:#fff;left:454.5px;width:40px;text-align:center;"><span style="font-size:13.4px;">D</span></div>
<div style="left:541px;top:44px;width:1px;height:20px;background:#bdbdbd;"></div>
<div class="t w" style="top:43px;color:#fff;left:557.5px;width:40px;text-align:center;"><span style="font-size:13.4px;">E</span></div>
<div style="left:612px;top:44px;width:1px;height:20px;background:#bdbdbd;"></div>
<div class="t w" style="top:43px;color:#fff;left:657px;width:40px;text-align:center;"><span style="font-size:13.4px;">F</span></div>
<div style="left:740px;top:44px;width:1px;height:20px;background:#bdbdbd;"></div>
<div class="t w" style="top:43px;color:#fff;left:796px;width:40px;text-align:center;"><span style="font-size:13.4px;">G</span></div>
<div style="left:890px;top:44px;width:1px;height:20px;background:#bdbdbd;"></div>
<div class="t w" style="top:43px;color:#fff;left:906.5px;width:40px;text-align:center;"><span style="font-size:13.4px;">H</span></div>
<div style="left:961px;top:44px;width:1px;height:20px;background:#bdbdbd;"></div>
<div class="t w" style="top:43px;color:#fff;left:977px;width:40px;text-align:center;"><span style="font-size:13.4px;">I</span></div>
<div style="left:1031px;top:44px;width:1px;height:20px;background:#bdbdbd;"></div>
<div class="t w" style="top:43px;color:#fff;left:1059.5px;width:40px;text-align:center;"><span style="font-size:13.4px;">J</span></div>
<div style="left:45px;top:87px;width:26px;height:1px;background:#bdbdbd;"></div>
<div class="t w" style="top:66px;color:#fff;left:44px;width:26px;text-align:center;"><span style="font-size:14.5px;">1</span></div>
<div style="left:71px;top:87px;width:1056px;height:1px;background:#d8d8d8;"></div>
<div style="left:141px;top:64px;width:1px;height:24px;background:#d8d8d8;"></div>
<div class="t " style="top:66px;color:#000;left:74px;width:67px;overflow:hidden;"><span style="font-size:14.6px;letter-spacing:0.35px;">InvoiceNo</span></div>
<div style="left:212px;top:64px;width:1px;height:24px;background:#d8d8d8;"></div>
<div class="t " style="top:66px;color:#000;left:144.2px;width:67.8px;overflow:hidden;"><span style="font-size:14.6px;letter-spacing:0.35px;">Customer</span></div>
<div style="left:406px;top:64px;width:1px;height:24px;background:#d8d8d8;"></div>
<div class="t " style="top:66px;color:#000;left:216px;width:190px;overflow:hidden;"><span style="font-size:14.6px;letter-spacing:0.35px;">InvoiceDate</span></div>
<div style="left:541px;top:64px;width:1px;height:24px;background:#d8d8d8;"></div>
<div class="t " style="top:66px;color:#000;left:409.2px;width:131.8px;overflow:hidden;"><span style="font-size:14.6px;letter-spacing:0.35px;">DueDate</span></div>
<div style="left:612px;top:64px;width:1px;height:24px;background:#d8d8d8;"></div>
<div class="t " style="top:66px;color:#000;left:544.2px;width:67.8px;overflow:hidden;"><span style="font-size:14.6px;letter-spacing:0.35px;">Terms</span></div>
<div style="left:740px;top:64px;width:1px;height:24px;background:#d8d8d8;"></div>
<div class="t " style="top:66px;color:#000;left:615.2px;width:124.8px;overflow:hidden;"><span style="font-size:14.6px;letter-spacing:0.35px;">Service Date</span></div>
<div style="left:890px;top:64px;width:1px;height:24px;background:#d8d8d8;"></div>
<div class="t " style="top:66px;color:#000;left:744px;width:146px;overflow:hidden;"><span style="font-size:14.6px;letter-spacing:0.35px;">Item Description</span></div>
<div style="left:961px;top:64px;width:1px;height:24px;background:#d8d8d8;"></div>
<div class="t " style="top:66px;color:#000;left:894px;width:67px;overflow:hidden;"><span style="font-size:14.6px;letter-spacing:0.35px;">Item Quantity</span></div>
<div style="left:1031px;top:64px;width:1px;height:24px;background:#d8d8d8;"></div>
<div class="t " style="top:66px;color:#000;left:965px;width:66px;overflow:hidden;"><span style="font-size:14.6px;letter-spacing:0.35px;">Item Rate</span></div>
<div class="t " style="top:66px;color:#000;left:1035px;width:91px;overflow:hidden;"><span style="font-size:14.6px;letter-spacing:0.35px;">Item Amount</span></div>
<div style="left:45px;top:88px;width:26px;height:22px;background:#676767;"></div>
<div style="left:69px;top:88px;width:2px;height:22px;background:#1f7145;"></div>
<div style="left:45px;top:109px;width:26px;height:1px;background:#bdbdbd;"></div>
<div class="t w" style="top:88px;color:#fff;left:44px;width:26px;text-align:center;"><span style="font-size:14.5px;">2</span></div>
<div style="left:71px;top:109px;width:1056px;height:1px;background:#d8d8d8;"></div>
<div style="left:141px;top:88px;width:1px;height:22px;background:#d8d8d8;"></div>
<div class="t " style="top:88px;color:#000;left:74px;width:67px;overflow:hidden;"><span style="font-size:14px;">I15033</span></div>
<div style="left:212px;top:88px;width:1px;height:22px;background:#d8d8d8;"></div>
<div class="t " style="top:88px;color:#000;left:-90.2px;width:300px;text-align:right;"><span style="font-size:14px;">230</span></div>
<div style="left:406px;top:88px;width:1px;height:22px;background:#d8d8d8;"></div>
<div class="t " style="top:88px;color:#000;left:104.25px;width:300px;text-align:right;"><span style="font-size:14px;letter-spacing:0.45px;">7/7/2023 0:00</span></div>
<div style="left:541px;top:88px;width:1px;height:22px;background:#d8d8d8;"></div>
<div class="t " style="top:88px;color:#000;left:239.25px;width:300px;text-align:right;"><span style="font-size:14px;letter-spacing:0.45px;">8/6/2023 0:00</span></div>
<div style="left:612px;top:88px;width:1px;height:22px;background:#d8d8d8;"></div>
<div class="t " style="top:88px;color:#000;left:544.2px;width:67.8px;overflow:hidden;"><span style="font-size:14.6px;letter-spacing:0.35px;">Net 30</span></div>
<div style="left:740px;top:88px;width:1px;height:22px;background:#d8d8d8;"></div>
<div class="t " style="top:88px;color:#000;left:438.25px;width:300px;text-align:right;"><span style="font-size:14px;letter-spacing:0.45px;">7/7/2023 0:00</span></div>
<div style="left:890px;top:88px;width:1px;height:22px;background:#d8d8d8;"></div>
<div class="t " style="top:88px;color:#000;left:743.2px;width:146.8px;overflow:hidden;"><span style="font-size:14px;">PO: 182163</span></div>
<div style="left:961px;top:88px;width:1px;height:22px;background:#d8d8d8;"></div>
<div class="t " style="top:88px;color:#000;left:658.8px;width:300px;text-align:right;"><span style="font-size:14px;">11</span></div>
<div style="left:1031px;top:88px;width:1px;height:22px;background:#d8d8d8;"></div>
<div class="t " style="top:88px;color:#000;left:724px;width:300px;text-align:right;"><span style="font-size:14px;">$43.62</span></div>
<div class="t " style="top:88px;color:#000;left:819px;width:300px;text-align:right;"><span style="font-size:14px;">$479.82</span></div>
<div style="left:45px;top:131px;width:26px;height:1px;background:#bdbdbd;"></div>
<div class="t w" style="top:110px;color:#fff;left:44px;width:26px;text-align:center;"><span style="font-size:14.5px;">3</span></div>
<div style="left:71px;top:131px;width:1056px;height:1px;background:#d8d8d8;"></div>
<div style="left:141px;top:110px;width:1px;height:22px;background:#d8d8d8;"></div>
<div class="t " style="top:110px;color:#000;left:74px;width:67px;overflow:hidden;"><span style="font-size:14px;">I15034</span></div>
<div style="left:212px;top:110px;width:1px;height:22px;background:#d8d8d8;"></div>
<div class="t " style="top:110px;color:#000;left:-90.2px;width:300px;text-align:right;"><span style="font-size:14px;">230</span></div>
<div style="left:406px;top:110px;width:1px;height:22px;background:#d8d8d8;"></div>
<div class="t " style="top:110px;color:#000;left:104.25px;width:300px;text-align:right;"><span style="font-size:14px;letter-spacing:0.45px;">7/7/2023 0:00</span></div>
<div style="left:541px;top:110px;width:1px;height:22px;background:#d8d8d8;"></div>
<div class="t " style="top:110px;color:#000;left:239.25px;width:300px;text-align:right;"><span style="font-size:14px;letter-spacing:0.45px;">8/6/2023 0:00</span></div>
<div style="left:612px;top:110px;width:1px;height:22px;background:#d8d8d8;"></div>
<div class="t " style="top:110px;color:#000;left:544.2px;width:67.8px;overflow:hidden;"><span style="font-size:14.6px;letter-spacing:0.35px;">Net 30</span></div>
<div style="left:740px;top:110px;width:1px;height:22px;background:#d8d8d8;"></div>
<div class="t " style="top:110px;color:#000;left:438.25px;width:300px;text-align:right;"><span style="font-size:14px;letter-spacing:0.45px;">7/7/2023 0:00</span></div>
<div style="left:890px;top:110px;width:1px;height:22px;background:#d8d8d8;"></div>
<div class="t " style="top:110px;color:#000;left:743.2px;width:146.8px;overflow:hidden;"><span style="font-size:14px;">PO: 182167</span></div>
<div style="left:961px;top:110px;width:1px;height:22px;background:#d8d8d8;"></div>
<div class="t " style="top:110px;color:#000;left:658.8px;width:300px;text-align:right;"><span style="font-size:14px;">17</span></div>
<div style="left:1031px;top:110px;width:1px;height:22px;background:#d8d8d8;"></div>
<div class="t " style="top:110px;color:#000;left:724px;width:300px;text-align:right;"><span style="font-size:14px;">$15.17</span></div>
<div class="t " style="top:110px;color:#000;left:819px;width:300px;text-align:right;"><span style="font-size:14px;">$257.89</span></div>
<div style="left:45px;top:153px;width:26px;height:1px;background:#bdbdbd;"></div>
<div class="t w" style="top:132px;color:#fff;left:44px;width:26px;text-align:center;"><span style="font-size:14.5px;">4</span></div>
<div style="left:71px;top:153px;width:1056px;height:1px;background:#d8d8d8;"></div>
<div style="left:141px;top:132px;width:1px;height:22px;background:#d8d8d8;"></div>
<div class="t " style="top:132px;color:#000;left:74px;width:67px;overflow:hidden;"><span style="font-size:14px;">I15035</span></div>
<div style="left:212px;top:132px;width:1px;height:22px;background:#d8d8d8;"></div>
<div class="t " style="top:132px;color:#000;left:-90.2px;width:300px;text-align:right;"><span style="font-size:14px;">230</span></div>
<div style="left:406px;top:132px;width:1px;height:22px;background:#d8d8d8;"></div>
<div class="t " style="top:132px;color:#000;left:104.25px;width:300px;text-align:right;"><span style="font-size:14px;letter-spacing:0.45px;">7/7/2023 0:00</span></div>
<div style="left:541px;top:132px;width:1px;height:22px;background:#d8d8d8;"></div>
<div class="t " style="top:132px;color:#000;left:239.25px;width:300px;text-align:right;"><span style="font-size:14px;letter-spacing:0.45px;">8/6/2023 0:00</span></div>
<div style="left:612px;top:132px;width:1px;height:22px;background:#d8d8d8;"></div>
<div class="t " style="top:132px;color:#000;left:544.2px;width:67.8px;overflow:hidden;"><span style="font-size:14.6px;letter-spacing:0.35px;">Net 30</span></div>
<div style="left:740px;top:132px;width:1px;height:22px;background:#d8d8d8;"></div>
<div class="t " style="top:132px;color:#000;left:438.25px;width:300px;text-align:right;"><span style="font-size:14px;letter-spacing:0.45px;">7/7/2023 0:00</span></div>
<div style="left:890px;top:132px;width:1px;height:22px;background:#d8d8d8;"></div>
<div class="t " style="top:132px;color:#000;left:743.2px;width:146.8px;overflow:hidden;"><span style="font-size:14px;">PO: 182414</span></div>
<div style="left:961px;top:132px;width:1px;height:22px;background:#d8d8d8;"></div>
<div class="t " style="top:132px;color:#000;left:658.8px;width:300px;text-align:right;"><span style="font-size:14px;">55</span></div>
<div style="left:1031px;top:132px;width:1px;height:22px;background:#d8d8d8;"></div>
<div class="t " style="top:132px;color:#000;left:724px;width:300px;text-align:right;"><span style="font-size:14px;">$7.15</span></div>
<div class="t " style="top:132px;color:#000;left:819px;width:300px;text-align:right;"><span style="font-size:14px;">$393.25</span></div>
<div style="left:45px;top:175px;width:26px;height:1px;background:#bdbdbd;"></div>
<div class="t w" style="top:154px;color:#fff;left:44px;width:26px;text-align:center;"><span style="font-size:14.5px;">5</span></div>
<div style="left:71px;top:175px;width:1056px;height:1px;background:#d8d8d8;"></div>
<div style="left:141px;top:154px;width:1px;height:22px;background:#d8d8d8;"></div>
<div class="t " style="top:154px;color:#000;left:74px;width:67px;overflow:hidden;"><span style="font-size:14px;">I15036</span></div>
<div style="left:212px;top:154px;width:1px;height:22px;background:#d8d8d8;"></div>
<div class="t " style="top:154px;color:#000;left:-90.2px;width:300px;text-align:right;"><span style="font-size:14px;">230</span></div>
<div style="left:406px;top:154px;width:1px;height:22px;background:#d8d8d8;"></div>
<div class="t " style="top:154px;color:#000;left:104.25px;width:300px;text-align:right;"><span style="font-size:14px;letter-spacing:0.45px;">7/7/2023 0:00</span></div>
<div style="left:541px;top:154px;width:1px;height:22px;background:#d8d8d8;"></div>
<div class="t " style="top:154px;color:#000;left:239.25px;width:300px;text-align:right;"><span style="font-size:14px;letter-spacing:0.45px;">8/6/2023 0:00</span></div>
<div style="left:612px;top:154px;width:1px;height:22px;background:#d8d8d8;"></div>
<div class="t " style="top:154px;color:#000;left:544.2px;width:67.8px;overflow:hidden;"><span style="font-size:14.6px;letter-spacing:0.35px;">Net 30</span></div>
<div style="left:740px;top:154px;width:1px;height:22px;background:#d8d8d8;"></div>
<div class="t " style="top:154px;color:#000;left:438.25px;width:300px;text-align:right;"><span style="font-size:14px;letter-spacing:0.45px;">7/7/2023 0:00</span></div>
<div style="left:890px;top:154px;width:1px;height:22px;background:#d8d8d8;"></div>
<div class="t " style="top:154px;color:#000;left:743.2px;width:146.8px;overflow:hidden;"><span style="font-size:14px;">PO: 182409</span></div>
<div style="left:961px;top:154px;width:1px;height:22px;background:#d8d8d8;"></div>
<div class="t " style="top:154px;color:#000;left:658.8px;width:300px;text-align:right;"><span style="font-size:14px;">83</span></div>
<div style="left:1031px;top:154px;width:1px;height:22px;background:#d8d8d8;"></div>
<div class="t " style="top:154px;color:#000;left:724px;width:300px;text-align:right;"><span style="font-size:14px;">$3.90</span></div>
<div class="t " style="top:154px;color:#000;left:819px;width:300px;text-align:right;"><span style="font-size:14px;">$323.70</span></div>
<div style="left:45px;top:197px;width:26px;height:1px;background:#bdbdbd;"></div>
<div class="t w" style="top:176px;color:#fff;left:44px;width:26px;text-align:center;"><span style="font-size:14.5px;">6</span></div>
<div style="left:71px;top:197px;width:1056px;height:1px;background:#d8d8d8;"></div>
<div style="left:141px;top:176px;width:1px;height:22px;background:#d8d8d8;"></div>
<div class="t " style="top:176px;color:#000;left:74px;width:67px;overflow:hidden;"><span style="font-size:14px;">I15037</span></div>
<div style="left:212px;top:176px;width:1px;height:22px;background:#d8d8d8;"></div>
<div class="t " style="top:176px;color:#000;left:-90.2px;width:300px;text-align:right;"><span style="font-size:14px;">230</span></div>
<div style="left:406px;top:176px;width:1px;height:22px;background:#d8d8d8;"></div>
<div class="t " style="top:176px;color:#000;left:104.25px;width:300px;text-align:right;"><span style="font-size:14px;letter-spacing:0.45px;">7/7/2023 0:00</span></div>
<div style="left:541px;top:176px;width:1px;height:22px;background:#d8d8d8;"></div>
<div class="t " style="top:176px;color:#000;left:239.25px;width:300px;text-align:right;"><span style="font-size:14px;letter-spacing:0.45px;">8/6/2023 0:00</span></div>
<div style="left:612px;top:176px;width:1px;height:22px;background:#d8d8d8;"></div>
<div class="t " style="top:176px;color:#000;left:544.2px;width:67.8px;overflow:hidden;"><span style="font-size:14.6px;letter-spacing:0.35px;">Net 30</span></div>
<div style="left:740px;top:176px;width:1px;height:22px;background:#d8d8d8;"></div>
<div class="t " style="top:176px;color:#000;left:438.25px;width:300px;text-align:right;"><span style="font-size:14px;letter-spacing:0.45px;">7/7/2023 0:00</span></div>
<div style="left:890px;top:176px;width:1px;height:22px;background:#d8d8d8;"></div>
<div class="t " style="top:176px;color:#000;left:743.2px;width:146.8px;overflow:hidden;"><span style="font-size:14px;">PO: 182307</span></div>
<div style="left:961px;top:176px;width:1px;height:22px;background:#d8d8d8;"></div>
<div class="t " style="top:176px;color:#000;left:658.8px;width:300px;text-align:right;"><span style="font-size:14px;">17</span></div>
<div style="left:1031px;top:176px;width:1px;height:22px;background:#d8d8d8;"></div>
<div class="t " style="top:176px;color:#000;left:724px;width:300px;text-align:right;"><span style="font-size:14px;">$23.25</span></div>
<div class="t " style="top:176px;color:#000;left:819px;width:300px;text-align:right;"><span style="font-size:14px;">$395.25</span></div>
<div style="left:211px;top:85px;width:197px;height:25px;box-sizing:border-box;border:2px solid #1f7145;"></div>
<div style="left:403px;top:105px;width:7px;height:7px;background:#fff;"></div>
<div style="left:404px;top:106px;width:5px;height:6px;background:#1f7145;"></div>
</div>
<div class="t lbl" style="top:175px;color:#000;left:56.5px;"><span style="font-size:22px;letter-spacing:0.68px;">MS Access Query</span></div>
<div class="t lbl" style="top:469px;color:#000;left:56.5px;"><span style="font-size:22px;letter-spacing:0.43px;">Export to .XLSX</span></div>
<div class="t lbl" style="top:737px;color:#000;left:56.5px;"><span style="font-size:22px;letter-spacing:0.49px;">Export to .CSV</span></div>
</body></html>
